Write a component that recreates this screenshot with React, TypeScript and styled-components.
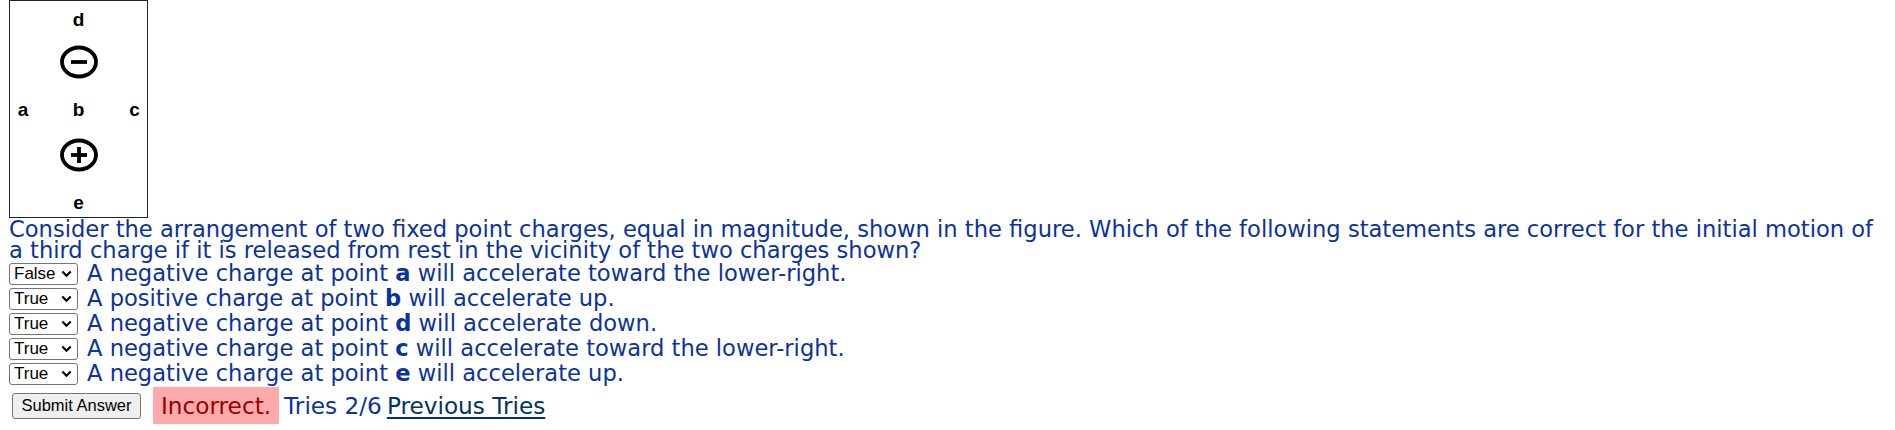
import React from "react";
import styled, { createGlobalStyle } from "styled-components";

const GlobalStyle = createGlobalStyle`
  html, body {
    margin: 0;
    padding: 0;
    background: #ffffff;
  }
  body {
    padding-left: 9px;
    font-family: "DejaVu Sans", Verdana, sans-serif;
  }
`;

const Page = styled.div`
  display: flex;
  flex-direction: column;
  align-items: flex-start;
`;

const FigureBox = styled.div`
  width: 137px;
  height: 216px;
  border: 1px solid #222;
`;

const Question = styled.div`
  width: 1878px;
  margin-top: 1px;
  font-size: 22.6px;
  line-height: 21px;
  color: #0a32a0;
`;

const Statements = styled.div`
  display: flex;
  flex-direction: column;
`;

const Row = styled.div`
  display: flex;
  align-items: center;
  gap: 9px;
  height: 25px;
  font-size: 22.6px;
  line-height: 25px;
  color: #0a32a0;
  white-space: nowrap;
`;

const SelectWrap = styled.span`
  position: relative;
  display: inline-flex;
  width: 69px;
  height: 22px;
`;

const Choice = styled.select`
  appearance: none;
  width: 100%;
  height: 100%;
  font-family: "Liberation Sans", Arial, sans-serif;
  font-size: 17px;
  line-height: 20px;
  color: #000;
  background: #fff;
  border: 1px solid #767676;
  border-radius: 3px;
  padding: 0 0 0 4px;
  margin: 0;
`;

const Chevron = styled.svg`
  position: absolute;
  right: 6px;
  top: 7px;
  pointer-events: none;
`;

const Point = styled.b`
  font-weight: bold;
`;

const Footer = styled.div`
  margin-top: 1px;
  display: flex;
  align-items: center;
  font-size: 23.2px;
  white-space: nowrap;
`;

const SubmitButton = styled.button`
  margin-left: 3px;
  width: 129px;
  height: 26px;
  padding: 0;
  font-family: "Liberation Sans", Arial, sans-serif;
  font-size: 16.5px;
  color: #000;
  background: #efefef;
  border: 1px solid #767676;
  border-radius: 3px;
`;

const Verdict = styled.span`
  margin-left: 12px;
  height: 37px;
  line-height: 37px;
  padding: 0 8px;
  background: #ffaaaa;
  color: #990000;
`;

const Tries = styled.span`
  margin-left: 5px;
  color: #0a32a0;
`;

const PreviousLink = styled.a`
  margin-left: 5px;
  color: #003366;
  text-decoration: underline;
  text-underline-offset: 3px;
`;

const Figure = () => (
  <FigureBox>
    <svg width="137" height="216" viewBox="0 0 137 216">
      <g
        fontFamily='"Liberation Sans", Arial, sans-serif'
        fontSize="19"
        fontWeight="bold"
        fill="#000"
        textAnchor="middle"
      >
        <text x="68.5" y="25">d</text>
        <text x="13" y="115">a</text>
        <text x="68.5" y="115">b</text>
        <text x="124.5" y="115">c</text>
        <text x="68.5" y="208">e</text>
      </g>
      <g stroke="#000" strokeWidth="3.8" fill="none">
        <ellipse cx="69" cy="61" rx="17" ry="14.5" />
        <line x1="61" y1="61" x2="77" y2="61" />
        <ellipse cx="69" cy="154" rx="17" ry="14.5" />
        <line x1="61" y1="154" x2="77" y2="154" />
        <line x1="69" y1="146" x2="69" y2="162" />
      </g>
    </svg>
  </FigureBox>
);

type Statement = {
  value: "True" | "False";
  before: string;
  point: string;
  after: string;
};

const statements: Statement[] = [
  { value: "False", before: "A negative charge at point", point: "a", after: "will accelerate toward the lower-right." },
  { value: "True", before: "A positive charge at point", point: "b", after: "will accelerate up." },
  { value: "True", before: "A negative charge at point", point: "d", after: "will accelerate down." },
  { value: "True", before: "A negative charge at point", point: "c", after: "will accelerate toward the lower-right." },
  { value: "True", before: "A negative charge at point", point: "e", after: "will accelerate up." },
];

export default function App() {
  return (
    <>
      <GlobalStyle />
      <Page>
        <Figure />
        <Question>
          Consider the arrangement of two fixed point charges, equal in magnitude, shown in the figure. Which of the
          following statements are correct for the initial motion of a third charge if it is released from rest in the
          vicinity of the two charges shown?
        </Question>
        <Statements>
          {statements.map((s, i) => (
            <Row key={i}>
              <SelectWrap>
                <Choice defaultValue={s.value}>
                  <option>True</option>
                  <option>False</option>
                </Choice>
                <Chevron width="11" height="8" viewBox="0 0 11 8">
                  <path d="M1.3 1.5 L5.5 5.7 L9.7 1.5" fill="none" stroke="#000" strokeWidth="2.2" />
                </Chevron>
              </SelectWrap>
              <span>
                {s.before} <Point>{s.point}</Point> {s.after}
              </span>
            </Row>
          ))}
        </Statements>
        <Footer>
          <SubmitButton>Submit Answer</SubmitButton>
          <Verdict>Incorrect.</Verdict>
          <Tries>Tries 2/6</Tries>
          <PreviousLink href="#">Previous Tries</PreviousLink>
        </Footer>
      </Page>
    </>
  );
}
